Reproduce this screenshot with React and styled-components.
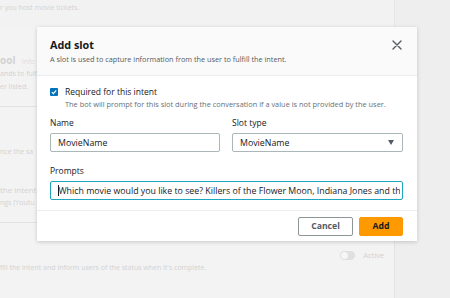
import React from "react";
import styled, { createGlobalStyle } from "styled-components";

const Global = createGlobalStyle`
  html, body { margin: 0; padding: 0; }
  body {
    width: 450px; height: 298px; overflow: hidden;
    background: #eeeeee;
    font-family: "Open Sans", "Liberation Sans", sans-serif;
  }
  * { box-sizing: border-box; }
`;

const Page = styled.div`
  position: relative;
  width: 450px;
  height: 298px;
  overflow: hidden;
  background: #eeeeee;
`;

const TopStrip = styled.div`
  height: 27px;
  padding: 3px 0 0 0;
  background: #f2f2f2;
  width: 395px;
  border-right: 1px solid #e6e6e6;
`;

const Ghost = styled.div`
  font-size: ${(p) => p.$size || 7}px;
  font-weight: ${(p) => (p.$bold ? 700 : 400)};
  color: ${(p) => p.$color || "#d2d2d2"};
  line-height: ${(p) => p.$lh || 10}px;
  white-space: nowrap;
  margin-top: ${(p) => p.$mt || 0}px;
`;

const Card = styled.div`
  width: 395px;
  height: 271px;
  background: #f3f3f3;
  border-right: 1px solid #e4e4e4;
  display: flex;
  flex-direction: column;
`;

const Section = styled.div`
  height: ${(p) => p.$h}px;
  padding-top: ${(p) => p.$pt || 0}px;
  border-bottom: ${(p) => (p.$line ? "1px solid #e2e2e2" : "none")};
`;

const GhostToggle = styled.div`
  display: flex;
  align-items: center;
  gap: 8px;
  width: fit-content;
  margin-left: auto;
  margin-right: 10px;
`;

const ToggleTrack = styled.span`
  width: 15px;
  height: 9px;
  border-radius: 5px;
  background: #e0e0e0;
  position: relative;
  &::after {
    content: "";
    position: absolute;
    left: 1px; top: 1px;
    width: 7px; height: 7px;
    border-radius: 50%;
    background: #f6f6f6;
  }
`;

const Modal = styled.div`
  position: absolute;
  left: 37px;
  top: 27px;
  width: 380px;
  height: 214px;
  background: #ffffff;
  box-shadow: 0 1px 4px rgba(0, 0, 0, 0.18);
  display: flex;
  flex-direction: column;
`;

const Header = styled.div`
  background: #fafafa;
  border-bottom: 1px solid #eaeded;
  padding: 10px 14px 11px 13px;
  display: flex;
  justify-content: space-between;
  align-items: flex-start;
`;

const Title = styled.div`
  font-size: 10.8px;
  font-weight: 700;
  line-height: 16px;
  color: #16191f;
`;

const Subtitle = styled.div`
  font-size: 7.3px;
  line-height: 10px;
  color: #545b64;
  margin-top: 1px;
  white-space: nowrap;
`;

const CloseBtn = styled.div`
  width: 10px;
  height: 10px;
  margin-top: 3px;
  margin-right: 1px;
  display: flex;
`;

const Body = styled.div`
  padding: 11px 14px 10px 13px;
  display: flex;
  flex-direction: column;
  border-bottom: 1px solid #eaeded;
`;

const CheckRow = styled.div`
  display: flex;
  gap: 7px;
  align-items: flex-start;
`;

const CheckBox = styled.span`
  width: 8px;
  height: 8px;
  margin-top: 1px;
  background: #0073bb;
  border-radius: 1px;
  display: flex;
  align-items: center;
  justify-content: center;
  flex-shrink: 0;
`;

const CheckText = styled.div`
  display: flex;
  flex-direction: column;
  gap: 2px;
`;

const CheckLabel = styled.div`
  font-size: 8.5px;
  line-height: 10px;
  color: #16191f;
`;

const Desc = styled.div`
  font-size: 7.4px;
  line-height: 10px;
  color: #687078;
  white-space: nowrap;
`;

const FieldGrid = styled.div`
  display: grid;
  grid-template-columns: 170px 1fr;
  column-gap: 12px;
  margin-top: 9px;
`;

const Field = styled.div`
  display: flex;
  flex-direction: column;
  margin-top: ${(p) => p.$mt || 0}px;
`;

const Label = styled.div`
  font-size: 8.5px;
  line-height: 10px;
  color: #16191f;
  margin-bottom: 5px;
`;

const Input = styled.div`
  height: 19px;
  border: ${(p) => (p.$focus ? "1.5px solid #1ea5c0" : "1px solid #aab7b8")};
  border-radius: 2px;
  padding: 0 ${(p) => (p.$focus ? 2 : 7)}px 0 ${(p) => (p.$focus ? 6.5 : 7)}px;
  display: flex;
  align-items: center;
  font-size: 8.8px;
  color: #16191f;
  overflow: hidden;
  white-space: nowrap;
  background: #fff;
`;

const Caret = styled.span`
  width: 1px;
  height: 11px;
  background: #16191f;
  flex-shrink: 0;
`;

const InputText = styled.span`
  flex: 1;
  overflow: hidden;
`;

const Arrow = styled.span`
  width: 0;
  height: 0;
  border-left: 3px solid transparent;
  border-right: 3px solid transparent;
  border-top: 5px solid #545b64;
  margin-left: auto;
  margin-right: 1px;
`;

const Footer = styled.div`
  flex: 1;
  display: flex;
  justify-content: flex-end;
  align-items: center;
  gap: 6px;
  padding: 0 14px 0 0;
`;

const Button = styled.button`
  height: 19px;
  width: ${(p) => p.$w}px;
  border-radius: 2px;
  font-family: "Open Sans", "Liberation Sans", sans-serif;
  font-size: 8.7px;
  font-weight: 700;
  padding: 0;
  cursor: pointer;
  border: 1px solid ${(p) => (p.$primary ? "#ff9900" : "#8d9596")};
  background: ${(p) => (p.$primary ? "#ff9900" : "#ffffff")};
  color: ${(p) => (p.$primary ? "#16191f" : "#545b64")};
`;

export default function App() {
  return (
    <Page>
      <Global />
      <TopStrip>
        <Ghost>r you host movie tickets.</Ghost>
      </TopStrip>
      <Card>
        <Section $h={80} $pt={27} $line>
          <Ghost $size={10} $bold $lh={13}>
            ool <Ghost as="span" $size={7} $color="#d8dde2">&nbsp;&nbsp;Info</Ghost>
          </Ghost>
          <Ghost $mt={2}>ands to fulf</Ghost>
          <Ghost $mt={3}>er listed.</Ghost>
        </Section>
        <Section $h={116} $pt={40} $line>
          <Ghost>nce the sa</Ghost>
          <Ghost $mt={28} $size={8}>the intent</Ghost>
          <Ghost $mt={3}>ngs (Youtu</Ghost>
        </Section>
        <Section $h={75} $pt={27}>
          <GhostToggle>
            <ToggleTrack />
            <Ghost $size={7.5}>Active</Ghost>
          </GhostToggle>
          <Ghost $mt={3}>fill the intent and inform users of the status when it's complete.</Ghost>
        </Section>
      </Card>

      <Modal>
        <Header>
          <div>
            <Title>Add slot</Title>
            <Subtitle>A slot is used to capture information from the user to fulfill the intent.</Subtitle>
          </div>
          <CloseBtn>
            <svg width="10" height="10" viewBox="0 0 10 10">
              <path d="M1 1 L9 9 M9 1 L1 9" stroke="#545b64" strokeWidth="1.4" strokeLinecap="round" fill="none" />
            </svg>
          </CloseBtn>
        </Header>
        <Body>
          <CheckRow>
            <CheckBox>
              <svg width="6" height="6" viewBox="0 0 6 6">
                <path d="M0.8 3.1 L2.4 4.6 L5.2 1.3" stroke="#fff" strokeWidth="1.2" fill="none" />
              </svg>
            </CheckBox>
            <CheckText>
              <CheckLabel>Required for this intent</CheckLabel>
              <Desc>The bot will prompt for this slot during the conversation if a value is not provided by the user.</Desc>
            </CheckText>
          </CheckRow>
          <FieldGrid>
            <Field>
              <Label>Name</Label>
              <Input>MovieName</Input>
            </Field>
            <Field>
              <Label>Slot type</Label>
              <Input>
                MovieName
                <Arrow />
              </Input>
            </Field>
          </FieldGrid>
          <Field $mt={14}>
            <Label>Prompts</Label>
            <Input $focus>
              <Caret />
              <InputText>Which movie would you like to see? Killers of the Flower Moon, Indiana Jones and the Dial of Destiny</InputText>
            </Input>
          </Field>
        </Body>
        <Footer>
          <Button $w={55}>Cancel</Button>
          <Button $w={44} $primary>Add</Button>
        </Footer>
      </Modal>
    </Page>
  );
}
